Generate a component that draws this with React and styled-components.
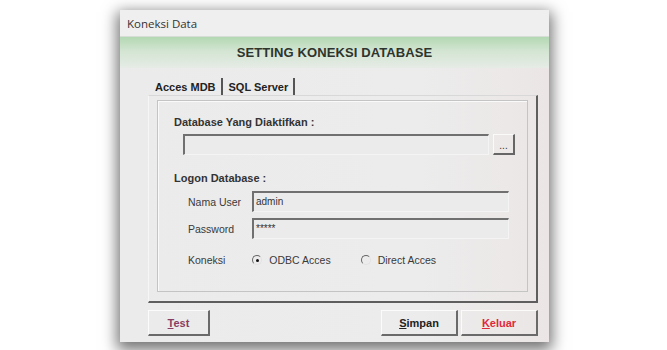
import React from "react";
import styled, { createGlobalStyle } from "styled-components";

const Global = createGlobalStyle`
  html, body { margin: 0; padding: 0; background: #ffffff; }
  body { font-family: "Liberation Sans", Arial, sans-serif; }
`;

const Page = styled.div`
  width: 667px;
  height: 350px;
  overflow: hidden;
  padding: 10px 0 0 120px;
  box-sizing: border-box;
`;

const Window = styled.div`
  width: 429px;
  height: 332px;
  background: linear-gradient(90deg, #ebebeb 0%, #ececec 70%, #ebe6e5 100%);
  box-shadow: 0 5px 14px 3px rgba(0, 0, 0, 0.55);
  display: flex;
  flex-direction: column;
`;

const TitleBar = styled.div`
  height: 27px;
  flex: none;
  display: flex;
  align-items: center;
  padding-left: 7px;
  background: #efefef;
  font-family: "Open Sans", "Noto Sans", sans-serif;
  font-size: 11.5px;
  color: #333;
  border-bottom: 1px solid #d6dcd6;
  box-sizing: border-box;
`;

const Header = styled.div`
  height: 31px;
  flex: none;
  display: flex;
  align-items: center;
  justify-content: center;
  background: linear-gradient(180deg, #b3d8b2 0%, #d3e5d2 45%, #e6ebe6 100%);
  font-weight: bold;
  font-size: 13px;
  color: #2e342e;
  letter-spacing: 0.1px;
`;

const Body = styled.div`
  flex: 1;
  display: flex;
  flex-direction: column;
  padding: 8px 11px 6px 28px;
`;

const TabStrip = styled.div`
  height: 19px;
  display: flex;
  align-items: stretch;
  padding-left: 7px;
`;

const Tab = styled.div`
  display: flex;
  align-items: center;
  padding-right: 5px;
  margin-right: 6px;
  font-weight: bold;
  font-size: 11px;
  color: #222;
  border-right: 2px solid #555;
  margin-top: 2px;
`;

const Panel = styled.div`
  height: 208px;
  box-sizing: border-box;
  border-top: 1px solid #d8d8d8;
  border-left: 1px solid #f6f6f6;
  border-right: 2px solid #5e5e5e;
  border-bottom: 2px solid #5e5e5e;
  padding: 4px 8px 9px 8px;
  display: flex;
`;

const Group = styled.div`
  flex: 1;
  border: 1px solid #c4c4c4;
  box-shadow: inset 1px 1px 0 #fafafa;
  padding: 15px 0 0 16px;
  display: flex;
  flex-direction: column;
`;

const Heading = styled.div`
  font-weight: bold;
  font-size: 11px;
  line-height: 13px;
  color: #333;
  margin-top: ${(p) => p.$top || 0}px;
`;

const PathRow = styled.div`
  display: flex;
  align-items: center;
  gap: 4px;
  margin: 5px 0 0 9px;
`;

const Input = styled.div`
  width: ${(p) => p.$w}px;
  height: 21px;
  box-sizing: border-box;
  background: #ebebeb;
  border-top: 2px solid #707070;
  border-left: 2px solid #707070;
  border-right: 1px solid #f4f4f4;
  border-bottom: 1px solid #f4f4f4;
  font-size: 10px;
  color: #333;
  padding: 2px 0 0 2px;
  line-height: 14px;
`;

const SmallButton = styled.div`
  width: 22px;
  height: 21px;
  box-sizing: border-box;
  border-top: 1px solid #fafafa;
  border-left: 1px solid #fafafa;
  border-right: 2px solid #666;
  border-bottom: 2px solid #666;
  display: flex;
  align-items: flex-end;
  justify-content: center;
  font-size: 10px;
  line-height: 10px;
  color: #333;
  padding-bottom: 2px;
`;

const Form = styled.div`
  display: grid;
  grid-template-columns: 64px 257px;
  row-gap: 6px;
  margin: 6px 0 0 14px;
  align-items: center;
`;

const Label = styled.div`
  font-size: 10.5px;
  color: #3a3a3a;
`;

const RadioRow = styled.div`
  display: flex;
  align-items: center;
  margin: 14px 0 0 14px;
  height: 14px;
`;

const RadioGroup = styled.div`
  display: flex;
  align-items: center;
  margin-left: ${(p) => p.$ml}px;
`;

const Radio = styled.span`
  width: 10px;
  height: 10px;
  border-radius: 50%;
  box-sizing: border-box;
  border: 1px solid #e2e2e2;
  border-top-color: #666;
  border-left-color: #666;
  display: flex;
  align-items: center;
  justify-content: center;
  margin-right: 7px;
  &::after {
    content: "";
    width: 3px;
    height: 3px;
    border-radius: 50%;
    background: ${(p) => (p.$on ? "#111" : "transparent")};
  }
`;

const Footer = styled.div`
  display: flex;
  align-items: center;
  margin-top: 7px;
  height: 26px;
  gap: 3px;
`;

const Button = styled.div`
  width: ${(p) => p.$w}px;
  height: 26px;
  box-sizing: border-box;
  border-top: 1px solid #fbfbfb;
  border-left: 1px solid #fbfbfb;
  border-right: 2px solid #6a6a6a;
  border-bottom: 2px solid #6a6a6a;
  display: flex;
  align-items: center;
  justify-content: center;
  font-weight: bold;
  font-size: 11px;
  color: ${(p) => p.$color};
  margin-left: ${(p) => p.$ml || 0}px;
  u { text-decoration: underline; }
`;

export default function App() {
  return (
    <>
      <Global />
      <Page>
        <Window>
          <TitleBar>Koneksi Data</TitleBar>
          <Header>SETTING KONEKSI DATABASE</Header>
          <Body>
            <TabStrip>
              <Tab>Acces MDB</Tab>
              <Tab>SQL Server</Tab>
            </TabStrip>
            <Panel>
              <Group>
                <Heading>Database Yang Diaktifkan :</Heading>
                <PathRow>
                  <Input $w={306} />
                  <SmallButton>...</SmallButton>
                </PathRow>
                <Heading $top={17}>Logon Database :</Heading>
                <Form>
                  <Label>Nama User</Label>
                  <Input $w={257}>admin</Input>
                  <Label>Password</Label>
                  <Input $w={257}>*****</Input>
                </Form>
                <RadioRow>
                  <Label>Koneksi</Label>
                  <RadioGroup $ml={27}>
                    <Radio $on />
                    <Label>ODBC Acces</Label>
                  </RadioGroup>
                  <RadioGroup $ml={30}>
                    <Radio />
                    <Label>Direct Acces</Label>
                  </RadioGroup>
                </RadioRow>
              </Group>
            </Panel>
            <Footer>
              <Button $w={62} $color="#8a3d60">
                <span><u>T</u>est</span>
              </Button>
              <Button $w={77} $ml={168} $color="#222">
                <span><u>S</u>impan</span>
              </Button>
              <Button $w={77} $color="#e0283a">
                <span><u>K</u>eluar</span>
              </Button>
            </Footer>
          </Body>
        </Window>
      </Page>
    </>
  );
}
